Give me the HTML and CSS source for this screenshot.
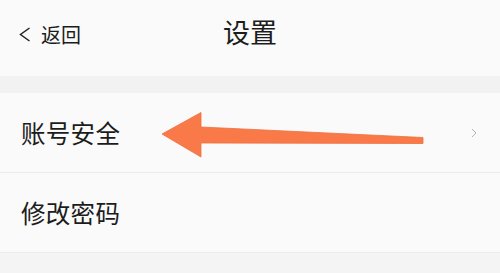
FILE: index.html
```html
<!DOCTYPE html>
<html lang="zh">
<head>
<meta charset="utf-8">
<link rel="stylesheet" href="styles.css">
</head>
<body>
<div class="page">
  <header class="nav">
    <div class="back">
      <svg class="back-icon" width="12" height="15" viewBox="0 0 12 15"><path d="M10.5 1 L1.5 7.5 L10.5 14" fill="none" stroke="#222" stroke-width="1.5"/></svg>
      <span class="back-text">返回</span>
    </div>
    <div class="title">设置</div>
  </header>
  <div class="band"></div>
  <div class="list">
    <div class="row">
      <span class="label">账号安全</span>
      <svg class="chev" width="6" height="10" viewBox="0 0 6 10"><path d="M1 1 L5 5 L1 9" fill="none" stroke="#b5b5b5" stroke-width="1"/></svg>
    </div>
    <div class="row">
      <span class="label">修改密码</span>
    </div>
  </div>
  <div class="band bottom"></div>
  <svg class="arrow" width="500" height="273" viewBox="0 0 500 273">
    <polygon points="162,134 201,112.5 201,127 423,137.5 423,143.5 201,143 201,157" fill="#f97a48" stroke="#ef6e3f" stroke-width="0.8" stroke-linejoin="round"/>
  </svg>
</div>
</body>
</html>
```
FILE: styles.css
```css
html, body {
  margin: 0;
  padding: 0;
}
body {
  width: 500px;
  height: 273px;
  overflow: hidden;
  background: #f3f3f3;
  font-family: "Noto Sans CJK SC", "Noto Sans", sans-serif;
  color: #1c1c1c;
}
.page {
  position: relative;
  width: 500px;
  height: 273px;
}
.nav {
  position: relative;
  height: 76px;
  background: #fafafa;
  display: flex;
  align-items: center;
}
.back {
  display: flex;
  align-items: center;
  padding-left: 19px;
  gap: 10px;
  margin-top: -7px;
}
.back-icon {
  display: block;
}
.back-text {
  font-size: 20px;
  line-height: 20px;
}
.title {
  position: absolute;
  left: 0;
  right: 0;
  top: 17px;
  text-align: center;
  font-size: 27px;
  line-height: 30px;
}
.band {
  height: 17px;
  background: #f2f2f2;
}
.band.bottom {
  height: 21px;
  background: #f4f4f4;
}
.list {
  background: #fafafa;
}
.row {
  height: 79px;
  display: flex;
  align-items: center;
  justify-content: space-between;
  padding: 0 23px 0 21px;
  border-bottom: 1px solid #ececec;
}
.label {
  font-size: 24.5px;
  line-height: 28px;
  letter-spacing: 0.3px;
}
.chev {
  display: block;
}
.arrow {
  position: absolute;
  left: 0;
  top: 0;
  pointer-events: none;
}
```
